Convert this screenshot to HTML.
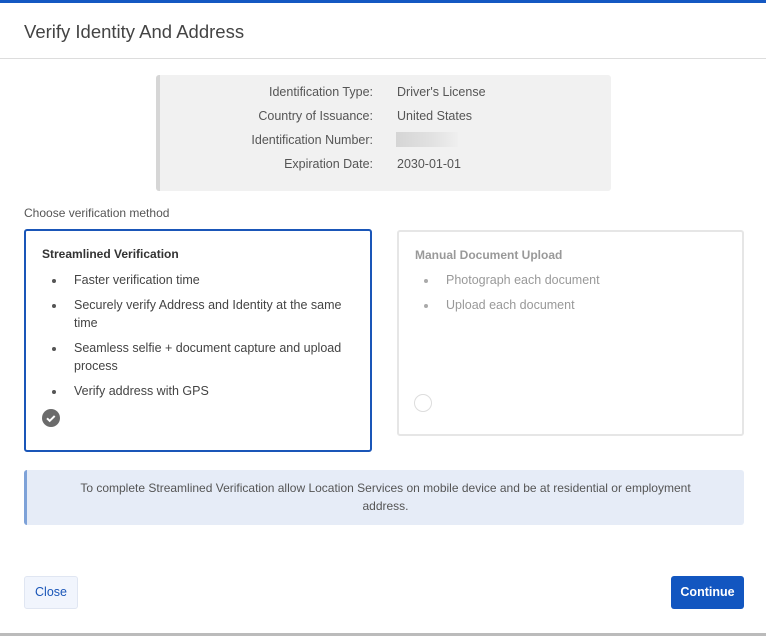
<!DOCTYPE html>
<html><head><style>
*{margin:0;padding:0;box-sizing:border-box}
body{width:766px;height:636px;background:#fff;font-family:"Liberation Sans",Arial,sans-serif;color:#444;position:relative;overflow:hidden}
.top{position:absolute;left:0;top:0;width:766px;height:3px;background:#1458c2}
.title{position:absolute;left:24px;top:21px;font-size:18.5px;color:#444}
.hr{position:absolute;left:0;top:58px;width:766px;height:1px;background:#ddd}
.box{position:absolute;left:156px;top:75px;width:455px;height:116px;background:#f1f1f1;border-left:4px solid #d6d6d6;border-radius:3px}
.row{position:absolute;font-size:12.5px;color:#555}
.l{right:238px;text-align:right}
.v{left:237px}
.blur{position:absolute;left:236px;top:57px;width:62px;height:15px;background:linear-gradient(90deg,#d5d5d5,#e2e2e2 60%,#efefef)}
.choose{position:absolute;left:24px;top:206px;font-size:12px;color:#555}
.card{position:absolute;border-radius:3px}
.c1{left:24px;top:229px;width:348px;height:223px;border:2px solid #1a56b8}
.c2{left:397px;top:230px;width:347px;height:206px;border:2px solid #e6e6e6}
.h{position:absolute;left:16px;top:16px;font-size:12px;font-weight:bold}
ul{position:absolute;left:16px;top:40px;list-style:none;font-size:12.5px;line-height:18px}
.c2 ul{left:15px;top:39px}
li{position:relative;padding-left:32px;margin-bottom:7px;width:300px}
li:before{content:"";position:absolute;left:10px;top:8px;width:4px;height:4px;border-radius:50%;background:#555}
.c2 li:before{background:#aaa}
.check{position:absolute;left:16px;top:178px;width:18px;height:18px;border-radius:50%;background:#6b6b6b}
.radio{position:absolute;left:15px;top:162px;width:18px;height:18px;border-radius:50%;border:1.5px solid #ddd}
.info{position:absolute;left:24px;top:470px;width:720px;height:55px;background:#e6ecf7;border-left:3px solid #7ea2d8;border-radius:3px;font-size:12px;color:#555;text-align:center;line-height:18px;padding:9px 30px 0}
.close{position:absolute;left:24px;top:576px;width:54px;height:33px;background:#f1f5fd;border:1px solid #e0e6f2;border-radius:3px;color:#1a56b8;font-size:12.5px;text-align:center;line-height:31px}
.cont{position:absolute;left:671px;top:576px;width:73px;height:33px;background:#1256c0;border-radius:3px;color:#fff;font-size:12.5px;font-weight:bold;text-align:center;line-height:33px}
.bot{position:absolute;left:0;top:633px;width:766px;height:3px;background:#bbb}
</style></head><body>
<div class="top"></div>
<div class="title">Verify Identity And Address</div>
<div class="hr"></div>
<div class="box">
<div class="row l" style="top:10px">Identification Type:</div><div class="row v" style="top:10px">Driver's License</div>
<div class="row l" style="top:34px">Country of Issuance:</div><div class="row v" style="top:34px">United States</div>
<div class="row l" style="top:58px">Identification Number:</div><div class="blur"></div>
<div class="row l" style="top:82px">Expiration Date:</div><div class="row v" style="top:82px">2030-01-01</div>
</div>
<div class="choose">Choose verification method</div>
<div class="card c1">
<div class="h" style="color:#333">Streamlined Verification</div>
<ul style="color:#444"><li>Faster verification time</li><li>Securely verify Address and Identity at the same time</li><li>Seamless selfie + document capture and upload process</li><li>Verify address with GPS</li></ul>
<div class="check"><svg width="18" height="18" viewBox="0 0 18 18"><path d="M5 9.3l2.7 2.6 5-5" stroke="#fff" stroke-width="2" fill="none"/></svg></div>
</div>
<div class="card c2">
<div class="h" style="color:#999">Manual Document Upload</div>
<ul style="color:#999"><li>Photograph each document</li><li>Upload each document</li></ul>
<div class="radio"></div>
</div>
<div class="info">To complete Streamlined Verification allow Location Services on mobile device and be at residential or employment address.</div>
<div class="close">Close</div>
<div class="cont">Continue</div>
<div class="bot"></div>
</body></html>
